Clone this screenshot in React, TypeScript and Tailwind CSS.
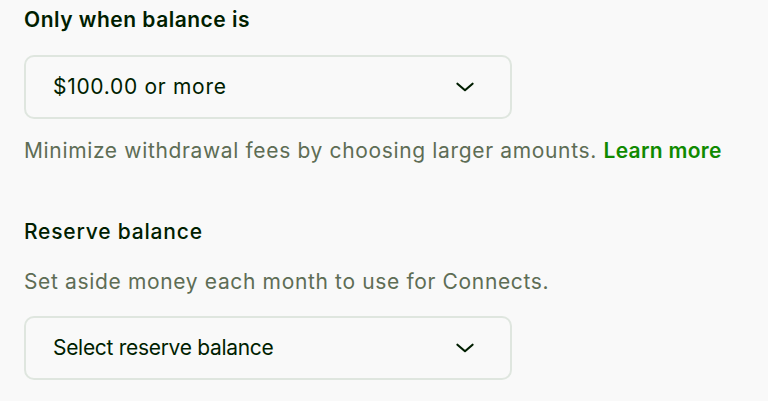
import React from 'react';

function Chevron() {
    return (
        <svg width="26" height="26" viewBox="0 0 24 24" fill="none" stroke="#001e00" strokeWidth="2" strokeLinecap="round" strokeLinejoin="round">
            <path d="M5 9l7 6 7-6" />
        </svg>
    );
}

function SelectBox({ label, className }: { label: string; className: string }) {
    return (
        <button className="w-[488px] h-[64px] flex items-center justify-between pl-[27px] pr-[32px] border-2 border-[#dfe6df] rounded-[10px] bg-[#f9f9f9] text-[21px] text-[#001e00]">
            <span className={className}>{label}</span>
            <Chevron />
        </button>
    );
}

export default function App() {
    return (
        <div className="min-h-screen bg-[#f9f9f9] px-[24px] pt-[5px] font-['Inter',sans-serif]">
            <h2 className="text-[21px] leading-[30px] font-semibold tracking-[0.5px] text-[#001e00]">Only when balance is</h2>
            <div className="mt-[20px]">
                <SelectBox label="$100.00 or more" className="tracking-[0.7px]" />
            </div>
            <p className="mt-[17px] text-[21px] leading-[30px] tracking-[0.65px] text-[#5e6d55]">
                Minimize withdrawal fees by choosing larger amounts.{' '}
                <a className="font-semibold tracking-[0.3px] text-[#108a00]">Learn more</a>
            </p>
            <h3 className="mt-[51px] text-[21px] leading-[30px] font-medium tracking-[0.8px] text-[#001e00]">Reserve balance</h3>
            <p className="mt-[20px] text-[21px] leading-[30px] tracking-[0.65px] text-[#5e6d55]">
                Set aside money each month to use for Connects.
            </p>
            <div className="mt-[19px]">
                <SelectBox label="Select reserve balance" className="tracking-[-0.3px]" />
            </div>
        </div>
    );
}
